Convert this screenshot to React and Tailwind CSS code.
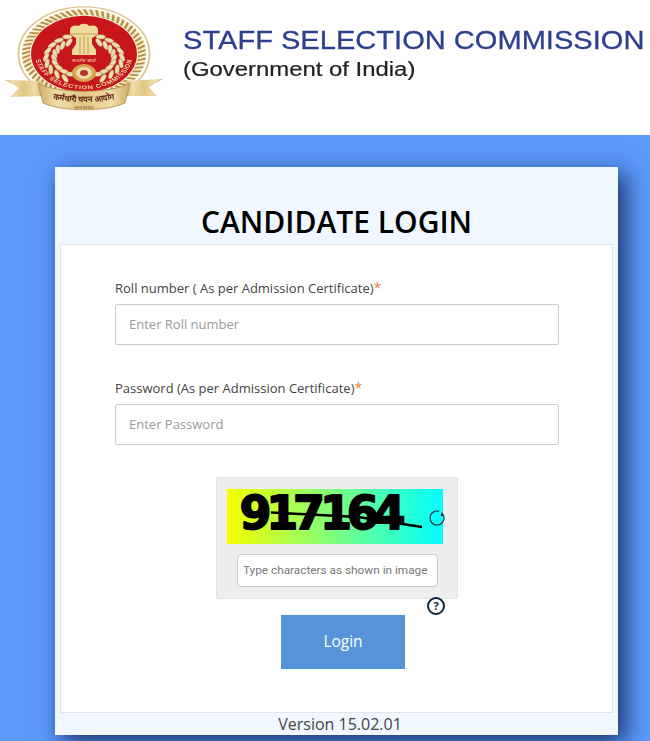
import React from "react";

const cream = "#efdfb0";

function wreathLeaves(side) {
  const out = [];
  [[38, 23.5, 24], [30, 18, -24]].forEach(([rx, ry, tilt], row) => {
    for (let i = 0; i < 9; i++) {
      const deg = 116 + i * 15.5 + row * 4;
      const a = (deg * Math.PI) / 180;
      const x = 84 + side * Math.cos(a) * rx;
      const y = 58 - Math.sin(a) * ry;
      const rot = side * (180 - deg + tilt);
      out.push(
        <ellipse key={`${row}-${i}`} cx={x} cy={y} rx="2.3" ry="4.8" fill={cream} stroke="#8f4a1a" strokeWidth="0.35" transform={`rotate(${rot} ${x} ${y})`} />
      );
    }
  });
  return out;
}

function Emblem() {
  const ticks = [];
  for (let i = 0; i < 64; i++) {
    ticks.push(
      <line key={i} x1="84" y1="-9" x2="88" y2="1" stroke="#b8923f" strokeWidth="2.6" transform={`rotate(${i * 5.625} 84 54)`} />
    );
  }
  return (
    <svg width="170" height="125" viewBox="0 0 170 125" className="block blur-[0.5px] shrink-0">
      <defs>
        <linearGradient id="rib" x1="0" y1="0" x2="1" y2="0">
          <stop offset="0" stopColor="#cfae68" />
          <stop offset="0.2" stopColor="#f0dca8" />
          <stop offset="0.5" stopColor="#e2c684" />
          <stop offset="0.8" stopColor="#f0dca8" />
          <stop offset="1" stopColor="#cfae68" />
        </linearGradient>
        <path id="arc" d="M 35 54 A 49 49 0 0 0 133 54" fill="none" />
        <path id="ribarc" d="M 42 96 Q 84 108 126 96" fill="none" />
        <clipPath id="ring"><circle cx="84" cy="54" r="62" /></clipPath>
      </defs>
      <g transform="translate(84 54) scale(1 0.72) translate(-84 -54)">
        <circle cx="84" cy="54" r="65.5" fill="#fff" stroke="#dcc388" strokeWidth="1.8" />
        <circle cx="84" cy="54" r="62" fill="#f7efd8" />
        <g clipPath="url(#ring)">{ticks}</g>
        <circle cx="84" cy="54" r="54" fill="#fff8e6" />
        <circle cx="84" cy="54" r="53" fill="#c8161d" />
        <text fontSize="7.4" fontWeight="700" fill="#f0d9a0" fontFamily="Liberation Sans" letterSpacing="0.75">
          <textPath href="#arc" startOffset="50%" textAnchor="middle">STAFF SELECTION COMMISSION</textPath>
        </text>
      </g>
      <g>{wreathLeaves(1)}{wreathLeaves(-1)}</g>
      <path d="M70 29 C71 25 77 25 79 26 C80 23 88 23 89 26 C92 25 97 25 98 29 L98 34 L94 37 L92 38 L92 44 L96 50 L96 55 L72 55 L72 50 L76 44 L76 38 L74 37 L70 34 Z" fill="#efdc9c" />
      <path d="M80 37 L80 54 M84 36 L84 54 M88 37 L88 54 M70 34 L98 34" stroke="#c99d55" strokeWidth="1" />
      <text x="84" y="62" textAnchor="middle" fontSize="4.6" fill="#f3e3b8" fontFamily="Liberation Sans">सत्यमेव जयते</text>
      <ellipse cx="84" cy="73" rx="12" ry="9" fill="#d9a24f" />
      <ellipse cx="84" cy="73" rx="8" ry="6" fill="#f0dcaa" />
      <ellipse cx="84" cy="73" rx="4" ry="3" fill="#b5352a" />
      <path d="M5 80 L42 81 L43 96 L10 97 L19 88 Z" fill="url(#rib)" />
      <path d="M163 79 L126 81 L125 96 L157 96 L149 87 Z" fill="url(#rib)" />
      <path d="M38 83 C55 94 113 94 130 83 L125 103 C105 112 63 112 43 103 Z" fill="url(#rib)" stroke="#b48d45" strokeWidth="0.8" />
      <text fontSize="8.2" fontWeight="700" fill="#5e2412" fontFamily="Liberation Sans">
        <textPath href="#ribarc" startOffset="50%" textAnchor="middle">कर्मचारी चयन आयोग</textPath>
      </text>
      <text x="84" y="108.5" textAnchor="middle" fontSize="3.8" fill="#5e2412" fontFamily="Liberation Sans">भारत सरकार</text>
    </svg>
  );
}

function Captcha() {
  return (
    <svg width="216" height="55" viewBox="0 0 216 55" className="block">
      <defs>
        <linearGradient id="cap" x1="0" y1="0" x2="1" y2="0">
          <stop offset="0" stopColor="#f6ff00" />
          <stop offset="1" stopColor="#00ffff" />
        </linearGradient>
      </defs>
      <rect width="216" height="55" fill="url(#cap)" />
      <text x="12.5" y="39.5" fontFamily="DejaVu Sans" fontWeight="700" fontSize="46" fill="#000" stroke="#000" strokeWidth="1.8" strokeLinejoin="round" letterSpacing="-5.2">917164</text>
      <path d="M44 23.5 L131 28 L195 38" stroke="#000" strokeWidth="2.4" fill="none" />
    </svg>
  );
}

function Field({ label, placeholder, className }) {
  return (
    <div className={className}>
      <label className="block text-[13px] leading-[20px] text-[#444] mb-[6px]">
        {label}<span className="text-[#e67e3c] text-[14px]">*</span>
      </label>
      <input
        placeholder={placeholder}
        className="block w-full h-[41px] px-[13px] text-[13px] bg-white border border-[#ccc] rounded-[2px] outline-none placeholder:text-[#999]"
      />
    </div>
  );
}

export default function App() {
  return (
    <div className="w-[650px] h-[741px] overflow-hidden bg-[#5b99fb] font-['Open_Sans',sans-serif]">
      <header className="h-[135px] bg-white flex items-start">
        <Emblem />
        <div className="ml-[13px] pt-[24px] font-['Liberation_Sans',sans-serif] blur-[0.3px] whitespace-nowrap">
          <div className="text-[26.5px] leading-[32px] text-[#2d3f8e] [-webkit-text-stroke:0.3px_#2d3f8e] origin-left scale-x-[1.097]">STAFF SELECTION COMMISSION</div>
          <div className="mt-[1px] text-[19.5px] leading-[24px] text-[#222] [-webkit-text-stroke:0.2px_#222] origin-left scale-x-[1.225]">(Government of India)</div>
        </div>
      </header>
      <main className="pt-[32px] pl-[55px]">
        <div className="w-[563px] h-[568px] bg-[#f0f7ff] shadow-[7px_7px_22px_rgba(10,20,60,0.8)] px-[5px] flex flex-col">
          <h1 className="h-[77px] pt-[35px] text-center text-[30px] leading-[40px] font-semibold text-black">CANDIDATE LOGIN</h1>
          <div className="h-[470px] bg-white border border-[#e3e3e3] pl-[54px] pr-[53px] pt-[33px] flex flex-col">
            <Field label="Roll number ( As per Admission Certificate)" placeholder="Enter Roll number" />
            <Field label="Password (As per Admission Certificate)" placeholder="Enter Password" className="mt-[33px]" />
            <div className="relative mt-[32px] self-center w-[242px] h-[122px] bg-[#eeeeee] border border-[#e2e2e2] rounded-[2px] px-[10px] pt-[11px]">
              <Captcha />
              <svg width="18" height="18" viewBox="0 0 18 18" className="absolute left-[211px] top-[31px]">
                <circle cx="9" cy="9" r="7" fill="none" stroke="#1d2f4a" strokeWidth="1.2" strokeDasharray="38 6" transform="rotate(-25 9 9)" />
                <path d="M14 3 L16.5 7 L12.5 7 Z" fill="#1d2f4a" />
              </svg>
              <input
                placeholder="Type characters as shown in image"
                className="block mt-[10px] ml-[10px] w-[201px] h-[33px] px-[5px] text-[11.8px] font-['Roboto',sans-serif] bg-white border border-[#ccc] rounded-[4px] outline-none placeholder:text-[#777]"
              />
              <span className="absolute left-[210px] top-[119px] w-[18px] h-[18px] rounded-full border-2 border-[#10263a] text-[11px] leading-[14px] font-bold text-center text-[#10263a] bg-white">?</span>
            </div>
            <button className="mt-[16px] ml-[166px] w-[124px] h-[54px] bg-[#5793d8] text-white text-[15.5px] font-medium">Login</button>
          </div>
          <div className="ml-[-5px] text-center pl-[12px] text-[16px] leading-[22px] text-[#444]">Version 15.02.01</div>
        </div>
      </main>
    </div>
  );
}
